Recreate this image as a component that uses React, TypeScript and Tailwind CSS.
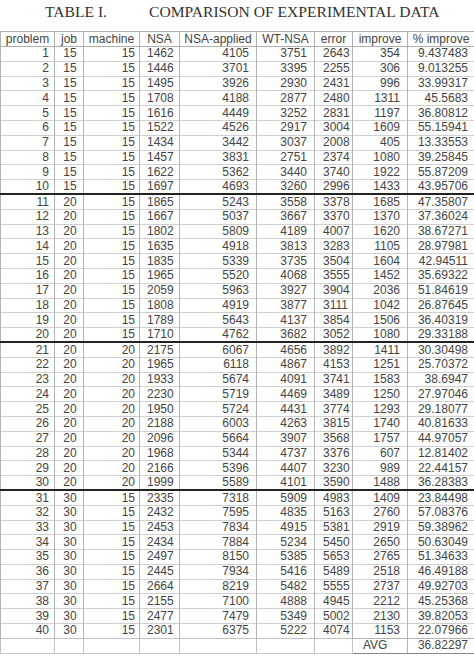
const rows: (string | number)[][] = [
  [1, 15, 15, 1462, 4105, 3751, 2643, 354, "9.437483"],
  [2, 15, 15, 1446, 3701, 3395, 2255, 306, "9.013255"],
  [3, 15, 15, 1495, 3926, 2930, 2431, 996, "33.99317"],
  [4, 15, 15, 1708, 4188, 2877, 2480, 1311, "45.5683"],
  [5, 15, 15, 1616, 4449, 3252, 2831, 1197, "36.80812"],
  [6, 15, 15, 1522, 4526, 2917, 3004, 1609, "55.15941"],
  [7, 15, 15, 1434, 3442, 3037, 2008, 405, "13.33553"],
  [8, 15, 15, 1457, 3831, 2751, 2374, 1080, "39.25845"],
  [9, 15, 15, 1622, 5362, 3440, 3740, 1922, "55.87209"],
  [10, 15, 15, 1697, 4693, 3260, 2996, 1433, "43.95706"],
  [11, 20, 15, 1865, 5243, 3558, 3378, 1685, "47.35807"],
  [12, 20, 15, 1667, 5037, 3667, 3370, 1370, "37.36024"],
  [13, 20, 15, 1802, 5809, 4189, 4007, 1620, "38.67271"],
  [14, 20, 15, 1635, 4918, 3813, 3283, 1105, "28.97981"],
  [15, 20, 15, 1835, 5339, 3735, 3504, 1604, "42.94511"],
  [16, 20, 15, 1965, 5520, 4068, 3555, 1452, "35.69322"],
  [17, 20, 15, 2059, 5963, 3927, 3904, 2036, "51.84619"],
  [18, 20, 15, 1808, 4919, 3877, 3111, 1042, "26.87645"],
  [19, 20, 15, 1789, 5643, 4137, 3854, 1506, "36.40319"],
  [20, 20, 15, 1710, 4762, 3682, 3052, 1080, "29.33188"],
  [21, 20, 20, 2175, 6067, 4656, 3892, 1411, "30.30498"],
  [22, 20, 20, 1965, 6118, 4867, 4153, 1251, "25.70372"],
  [23, 20, 20, 1933, 5674, 4091, 3741, 1583, "38.6947"],
  [24, 20, 20, 2230, 5719, 4469, 3489, 1250, "27.97046"],
  [25, 20, 20, 1950, 5724, 4431, 3774, 1293, "29.18077"],
  [26, 20, 20, 2188, 6003, 4263, 3815, 1740, "40.81633"],
  [27, 20, 20, 2096, 5664, 3907, 3568, 1757, "44.97057"],
  [28, 20, 20, 1968, 5344, 4737, 3376, 607, "12.81402"],
  [29, 20, 20, 2166, 5396, 4407, 3230, 989, "22.44157"],
  [30, 20, 20, 1999, 5589, 4101, 3590, 1488, "36.28383"],
  [31, 30, 15, 2335, 7318, 5909, 4983, 1409, "23.84498"],
  [32, 30, 15, 2432, 7595, 4835, 5163, 2760, "57.08376"],
  [33, 30, 15, 2453, 7834, 4915, 5381, 2919, "59.38962"],
  [34, 30, 15, 2434, 7884, 5234, 5450, 2650, "50.63049"],
  [35, 30, 15, 2497, 8150, 5385, 5653, 2765, "51.34633"],
  [36, 30, 15, 2445, 7934, 5416, 5489, 2518, "46.49188"],
  [37, 30, 15, 2664, 8219, 5482, 5555, 2737, "49.92703"],
  [38, 30, 15, 2155, 7100, 4888, 4945, 2212, "45.25368"],
  [39, 30, 15, 2477, 7479, 5349, 5002, 2130, "39.82053"],
  [40, 30, 15, 2301, 6375, 5222, 4074, 1153, "22.07966"],
];

const headers = ["problem", "job", "machine", "NSA", "NSA-applied", "WT-NSA", "error", "improve", "% improve"];
const widths = [54, 29, 56, 40, 77, 58, 38, 55, 67];

// alignment per column for data cells
const align = [
  "text-right pr-[5px]",
  "text-center pl-[2px]",
  "text-right pr-[4px]",
  "text-left pl-[7px]",
  "text-right pr-[7px]",
  "text-right pr-[7px]",
  "text-left pl-[8px]",
  "text-right pr-[7px]",
  "text-right pr-[6px]",
];

export default function App() {
  return (
    <div className="w-[474px] h-[656px] bg-white overflow-hidden">
      <div
        className="h-[31px] flex pt-[3px] text-[15.6px] leading-[18px] text-[#333]"
        style={{ fontFamily: '"Liberation Serif", "Times New Roman", serif' }}
      >
        <span className="ml-[45px]">TABLE I.</span>
        <span className="ml-[42px]">COMPARISON OF EXPERIMENTAL DATA</span>
      </div>
      <table
        className="table-fixed border-collapse w-[474px] text-[12px] leading-[13px] text-[#444]"
        style={{ fontFamily: '"Liberation Sans", Arial, sans-serif' }}
      >
        <colgroup>
          {widths.map((w, i) => (
            <col key={i} style={{ width: w }} />
          ))}
        </colgroup>
        <thead>
          <tr className="h-[15px]">
            {headers.map((h) => (
              <th key={h} className="font-normal text-center p-0 border border-[#b0b0b0]">
                {h}
              </th>
            ))}
          </tr>
        </thead>
        <tbody>
          {rows.map((r, ri) => (
            <tr
              key={ri}
              className={
                ri === 9 || ri === 19 || ri === 29
                  ? "h-[14.8px] border-b-2 border-b-[#222]"
                  : "h-[14.8px]"
              }
            >
              {r.map((v, ci) => (
                <td
                  key={ci}
                  className={`p-0 border-x border-t border-x-[#b4b4b4] border-t-[#d0d0d0] ${align[ci]}`}
                >
                  {v}
                </td>
              ))}
            </tr>
          ))}
          <tr className="h-[15px]">
            {widths.slice(0, 7).map((_, i) => (
              <td key={i} className="p-0 border border-[#c4c4c4]"></td>
            ))}
            <td className="p-0 pl-[10px] text-left border border-[#b4b4b4] border-b-[#888]">AVG</td>
            <td className="p-0 pr-[6px] text-right border border-[#b4b4b4] border-b-[#888]">36.82297</td>
          </tr>
        </tbody>
      </table>
    </div>
  );
}
